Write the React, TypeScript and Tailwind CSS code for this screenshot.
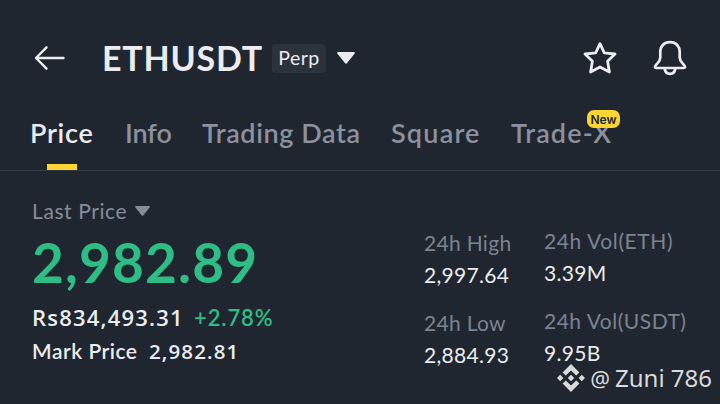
const tabs = [
    { label: "Price", className: "w-[95px] tracking-[0.7px] text-[#eaecef]", active: true },
    { label: "Info", className: "w-[77px] tracking-[-0.1px] text-[#8b919e]" },
    { label: "Trading Data", className: "w-[189px] tracking-[0.6px] text-[#8b919e]" },
    { label: "Square", className: "w-[120px] tracking-[1.2px] text-[#8b919e]" },
    { label: "Trade-X", className: "w-[110px] tracking-[1.1px] text-[#8b919e]", isNew: true },
];

function BackIcon() {
    return (
        <svg width="32" height="26" viewBox="0 0 32 26" fill="none" stroke="#eaecef" strokeWidth="2.4" strokeLinecap="round" strokeLinejoin="round">
            <path d="M12.5 2.3 2 13l10.5 10.7M2 13h27.5" />
        </svg>
    );
}

function Caret({ className }: { className: string }) {
    return (
        <svg viewBox="0 0 18 12" className={className} fill="currentColor">
            <path d="M1 0h16q1.4.4.5 1.7l-7.4 9.3q-1.1 1.3-2.2 0L.5 1.7Q-.4.4 1 0Z" />
        </svg>
    );
}

function StarIcon() {
    return (
        <svg width="36" height="36" viewBox="0 0 36 36" fill="none" stroke="#eaecef" strokeWidth="2.8" strokeLinejoin="round">
            <path d="M18 3.7 22.3 12.9 33 14 25.6 21.2 27.4 32 18 27 8.6 32 10.4 21.2 3 14 13.7 12.9Z" />
        </svg>
    );
}

function BellIcon() {
    return (
        <svg width="36" height="36" viewBox="0 0 36 36" fill="none" stroke="#eaecef" strokeWidth="2.7" strokeLinejoin="round">
            <path d="M18 2.2C11.8 2.2 8.3 6.5 8.3 12v5.5c0 3.6-1.9 4.8-4.3 7.5-1.7 2-1.2 3 .4 3h27.2c1.6 0 2.1-1 .4-3-2.4-2.7-4.3-3.9-4.3-7.5V12c0-5.5-3.5-9.8-9.7-9.8Z" />
            <path d="M12.6 28.5c.5 3.4 2.5 5.3 5.4 5.3s4.9-1.9 5.4-5.3" />
        </svg>
    );
}

function BinanceLogo() {
    return (
        <svg width="28" height="28" viewBox="0 0 28 28" fill="#d9dadc">
            <path d="M14 0 22.4 8.4 19.2 11.6 14 6.4 8.8 11.6 5.6 8.4Z" />
            <path d="M14 28 22.4 19.6 19.2 16.4 14 21.6 8.8 16.4 5.6 19.6Z" />
            <path d="M3.2 10.8 6.4 14 3.2 17.2 0 14ZM24.8 10.8 28 14 24.8 17.2 21.6 14ZM14 10.8 17.2 14 14 17.2 10.8 14Z" />
        </svg>
    );
}

function Stat({ label, value, labelClassName }: { label: string; value: string; labelClassName: string }) {
    return (
        <div className="h-20 whitespace-nowrap text-[21px] leading-8">
            <div className={`h-8 text-[#7c8390] ${labelClassName}`}>{label}</div>
            <div className="h-8 tracking-[0.3px] text-[#eaecef]">{value}</div>
        </div>
    );
}

export default function App() {
    return (
        <div className="relative h-[404px] w-[720px] overflow-hidden bg-[#202630] font-['Lato','Open_Sans',sans-serif] text-[#eaecef]">
            <header className="flex h-[116px] items-center pr-8 pl-[34px]">
                <BackIcon />
                <h1 className="ml-[36px] w-[162px] text-[34px] leading-10 font-bold tracking-[0.8px] whitespace-nowrap">ETHUSDT</h1>
                <span className="ml-2 flex h-[29px] w-[54px] items-center justify-center rounded-[4px] bg-[#2b323c] text-[19.5px] tracking-[0.5px]">Perp</span>
                <Caret className="ml-[11px] h-3 w-[18px]" />
                <div className="ml-auto flex gap-[34px]">
                    <StarIcon />
                    <BellIcon />
                </div>
            </header>

            <nav className="flex h-[55px] border-b border-[#333b47] pl-[30px] text-[27px] leading-[33px] font-semibold whitespace-nowrap">
                {tabs.map((tab) => (
                    <div key={tab.label} className={`relative shrink-0 ${tab.className}`}>
                        {tab.label}
                        {tab.active && <span className="absolute top-12 left-[17px] h-1.5 w-[30px] bg-[#fcd535]" />}
                        {tab.isNew && (
                            <span className="absolute -top-1.5 left-[76px] flex h-[18px] w-[33px] items-center justify-center rounded-[7px] bg-[#fcd535] font-['Inter',sans-serif] text-[12px] font-semibold tracking-normal text-[#202630]">
                                New
                            </span>
                        )}
                    </div>
                ))}
            </nav>

            <main className="flex pl-8 whitespace-nowrap">
                <section className="w-[392px] pt-[24px]">
                    <div className="flex h-8 items-center text-[21px] tracking-[0.6px] text-[#868d9a]">
                        <span className="w-[103px]">Last Price</span>
                        <Caret className="h-[10px] w-[15px]" />
                    </div>
                    <div className="h-[73px] text-[55px] leading-[70px] font-bold tracking-[1.1px] text-[#2ebd85]">2,982.89</div>
                    <div className="flex h-[34px] items-center text-[22px] font-semibold">
                        <span className="w-[162px] font-['Open_Sans',sans-serif] tracking-[1.2px]">Rs834,493.31</span>
                        <span className="tracking-[0.9px] text-[#2ebd85]">+2.78%</span>
                    </div>
                    <div className="flex h-[34px] items-center text-[21px] font-semibold">
                        <span className="w-[117px] tracking-[0.5px]">Mark Price</span>
                        <span className="font-['Open_Sans',sans-serif] text-[20.5px] tracking-[1.1px]">2,982.81</span>
                    </div>
                </section>
                <section className="w-[120px] pt-[56px]">
                    <Stat label="24h High" value="2,997.64" labelClassName="tracking-[0.3px]" />
                    <Stat label="24h Low" value="2,884.93" labelClassName="tracking-[0.3px]" />
                </section>
                <section className="pt-[54px]">
                    <Stat label="24h Vol(ETH)" value="3.39M" labelClassName="tracking-[0.6px]" />
                    <Stat label="24h Vol(USDT)" value="9.95B" labelClassName="tracking-[0.5px]" />
                </section>
            </main>

            <div className="absolute right-2 bottom-3 flex h-7 items-center font-['Noto_Sans',sans-serif] text-[24px] whitespace-nowrap text-[#d9dadc]">
                <BinanceLogo />
                <span className="ml-[5px] text-[22px]">@</span>
                <span className="ml-[5px]">Zuni 786</span>
            </div>
        </div>
    );
}
